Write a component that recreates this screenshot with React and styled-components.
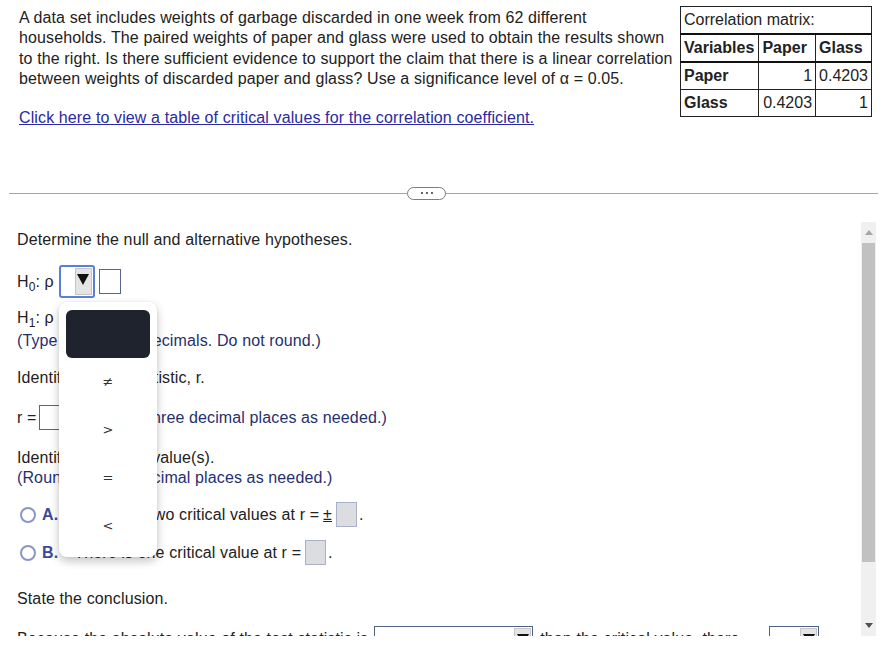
import styled, { createGlobalStyle } from "styled-components"

const GlobalStyle = createGlobalStyle`
  html, body { margin:0; padding:0; background:#fff; }
  body {
    font-family:"Liberation Sans", Arial, sans-serif;
    font-size:16px;
    letter-spacing:0.12px;
    color:#222;
  }
`

const Page = styled.div`
  width:887px;
  height:649px;
  overflow:hidden;
  display:flex;
  flex-direction:column;
`

const Top = styled.div`
  display:flex;
  align-items:flex-start;
  padding:6px 15px 0 19px;
`

const Question = styled.div`
  width:661px;
  padding-top:2px;
  line-height:20.4px;
`

const Link = styled.a`
  display:block;
  margin-top:18px;
  line-height:20px;
  color:#2a2aa2;
  text-decoration:underline;
  cursor:pointer;
`

const Matrix = styled.table`
  border-collapse:collapse;
  border:1px solid #111;
  width:192px;
  line-height:18px;
  letter-spacing:0;
  td {
    border:1px solid #222;
    height:26px;
    padding:0 3px;
    white-space:nowrap;
  }
`

const Cell = styled.td`
  text-align:${p => (p.$num ? "right" : "left")};
  font-weight:${p => (p.$bold ? "bold" : "normal")};
  width:${p => p.$w || "auto"};
`

const ThickRow = styled.tr`
  td { border-bottom:2px solid #111; }
`

const Divider = styled.div`
  display:flex;
  align-items:center;
  height:13px;
  margin-top:59px;
  padding:0 9px;
`

const Rule = styled.div`
  height:1px;
  background:#a4a4a4;
  flex:${p => (p.$grow ? 1 : "none")};
  width:${p => (p.$grow ? "auto" : "398px")};
`

const Pill = styled.div`
  width:39px;
  height:13px;
  box-sizing:border-box;
  border:1px solid #7d7d7d;
  border-radius:7px;
  display:flex;
  align-items:center;
  justify-content:center;
  gap:3px;
  span {
    width:2px;
    height:2px;
    background:#666;
  }
`

const Pane = styled.div`
  display:flex;
  height:414px;
  margin-top:22px;
`

const Content = styled.div`
  flex:1;
  position:relative;
  overflow:hidden;
  padding:8px 0 0 17px;
`

const Line = styled.div`
  line-height:20px;
  margin-top:${p => p.$mt || 0}px;
  white-space:nowrap;
`

const Hint = styled.span`
  color:#26306f;
`

const Row = styled.div`
  display:flex;
  align-items:center;
  height:${p => p.$h || 26}px;
  margin-top:${p => p.$mt || 0}px;
  white-space:nowrap;
`

const Label = styled.span`
  line-height:20px;
`

const Sub = styled.sub`
  font-size:12px;
  vertical-align:-4px;
  line-height:0;
`

const Select = styled.div`
  box-sizing:border-box;
  width:${p => p.$w}px;
  height:${p => p.$h}px;
  margin:0 ${p => p.$mr || 0}px 0 ${p => p.$ml || 0}px;
  border:${p => (p.$focus ? "2px solid #5b7fd5" : "1px solid #4f6186")};
  border-radius:${p => (p.$focus ? 3 : 0)}px;
  display:flex;
  justify-content:flex-end;
  padding:1px;
  background:#fff;
`

const SelectArrow = styled.div`
  width:17px;
  box-sizing:border-box;
  background:#e4e4e4;
  border:1px solid #c6c6c6;
  display:flex;
  justify-content:center;
  padding-top:5px;
  &::after {
    content:"";
    width:0;
    height:0;
    border-left:6px solid transparent;
    border-right:6px solid transparent;
    border-top:11px solid #111;
  }
`

const Box = styled.div`
  box-sizing:border-box;
  width:${p => p.$w}px;
  height:25px;
  margin:0 ${p => p.$mr || 0}px 0 ${p => p.$ml || 0}px;
  border:1px solid ${p => (p.$gray ? "#a9b1c9" : "#56668a")};
  background:${p => (p.$gray ? "#dcdde1" : "#fff")};
`

const Radio = styled.span`
  box-sizing:border-box;
  width:16px;
  height:16px;
  margin-left:3px;
  border:2px solid #8996c6;
  border-radius:50%;
`

const Letter = styled.b`
  color:#3c4a98;
  margin:0 16px 0 6px;
`

const Plus = styled.span`
  margin-left:4px;
  text-decoration:underline;
`

const Menu = styled.div`
  position:absolute;
  left:59px;
  top:80px;
  width:98px;
  box-sizing:border-box;
  padding:8px 7px 7px;
  background:#fff;
  border-radius:8px;
  box-shadow:0 4px 10px rgba(0,0,0,0.24), 0 0 2px rgba(0,0,0,0.08);
`

const MenuItem = styled.div`
  height:48px;
  display:flex;
  align-items:center;
  justify-content:center;
  font-family:"DejaVu Sans", sans-serif;
  font-size:13px;
  color:#333;
  border-radius:6px;
  background:${p => (p.$active ? "#1e232d" : "transparent")};
`

const Scrollbar = styled.div`
  width:15px;
  margin-right:11px;
  background:#f0f0f0;
  display:flex;
  flex-direction:column;
`

const ArrowCell = styled.div`
  height:21px;
  display:flex;
  align-items:center;
  justify-content:center;
  &::after {
    content:"";
    width:0;
    height:0;
    border-left:4px solid transparent;
    border-right:4px solid transparent;
    ${p => (p.$down
      ? "border-top:5px solid #505050;"
      : "border-bottom:5px solid #a6a6a6;")}
  }
`

const Thumb = styled.div`
  height:319px;
  margin:0 1px;
  background:#c1c1c1;
`

const Spacer = styled.div`
  flex:1;
`

const options = ["", "\u2260", ">", "=", "<"]

const App = () => {
  return (
    <Page>
      <GlobalStyle />
      <Top>
        <Question>
          A data set includes weights of garbage discarded in one week from 62 different<br />
          households. The paired weights of paper and glass were used to obtain the results shown<br />
          to the right. Is there sufficient evidence to support the claim that there is a linear correlation<br />
          between weights of discarded paper and glass? Use a significance level of α = 0.05.
          <Link>Click here to view a table of critical values for the correlation coefficient.</Link>
        </Question>
        <Matrix>
          <tbody>
            <ThickRow>
              <td colSpan={3}>Correlation matrix:</td>
            </ThickRow>
            <ThickRow>
              <Cell $bold $w="72px">Variables</Cell>
              <Cell $bold $w="50px">Paper</Cell>
              <Cell $bold>Glass</Cell>
            </ThickRow>
            <tr>
              <Cell $bold>Paper</Cell>
              <Cell $num>1</Cell>
              <Cell $num>0.4203</Cell>
            </tr>
            <tr>
              <Cell $bold>Glass</Cell>
              <Cell $num>0.4203</Cell>
              <Cell $num>1</Cell>
            </tr>
          </tbody>
        </Matrix>
      </Top>

      <Divider>
        <Rule />
        <Pill><span /><span /><span /></Pill>
        <Rule $grow />
      </Divider>

      <Pane>
        <Content>
          <Line>Determine the null and alternative hypotheses.</Line>
          <Row $h={34} $mt={15}>
            <Label>H<Sub>0</Sub>: ρ</Label>
            <Select $focus $w={36} $h={33} $ml={5}><SelectArrow /></Select>
            <Box $w={22} $ml={4} />
          </Row>
          <Line $mt={9}>H<Sub>1</Sub>: ρ</Line>
          <Line $mt={3}><Hint>(Type integers or decimals. Do not round.)</Hint></Line>
          <Line $mt={17}>Identify the test statistic, r.</Line>
          <Row $mt={17}>
            r =<Box $w={27} $ml={3} $mr={5} />
            <Hint>(Round to three decimal places as needed.)</Hint>
          </Row>
          <Line $mt={17}>Identify the critical value(s).</Line>
          <Line><Hint>(Round to three decimal places as needed.)</Hint></Line>
          <Row $mt={14}>
            <Radio />
            <Letter>A.</Letter>
            There are two critical values at r =<Plus>±</Plus>
            <Box $gray $w={21} $ml={4} $mr={2} />.
          </Row>
          <Row $mt={12}>
            <Radio />
            <Letter>B.</Letter>
            There is one critical value at r =
            <Box $gray $w={21} $ml={4} $mr={2} />.
          </Row>
          <Line $mt={23}>State the conclusion.</Line>
          <Row $mt={17}>
            Because the absolute value of the test statistic is
            <Select $w={159} $h={26} $ml={6} $mr={7}><SelectArrow /></Select>
            than the critical value, there
            <Select $w={50} $h={26} $ml={30}><SelectArrow /></Select>
          </Row>

          <Menu>
            {options.map((o, i) => (
              <MenuItem key={i} $active={i === 0}>{o}</MenuItem>
            ))}
          </Menu>
        </Content>
        <Scrollbar>
          <ArrowCell />
          <Thumb />
          <Spacer />
          <ArrowCell $down />
        </Scrollbar>
      </Pane>
    </Page>
  )
}

export default App
